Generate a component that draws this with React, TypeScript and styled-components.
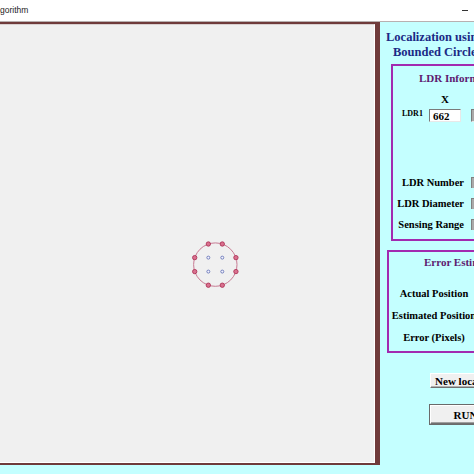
import React from "react";
import styled, { createGlobalStyle } from "styled-components";

const GlobalStyle = createGlobalStyle`
  html, body { margin: 0; padding: 0; overflow: hidden; background: #ffffff; }
  #root { width: 474px; height: 474px; }
`;

const BROWN = "#6f3a3a";
const CYAN = "#c4ffff";
const PURPLE = "#a22ab0";

const Window = styled.div`
  width: 474px;
  height: 474px;
  display: flex;
  flex-direction: column;
  overflow: hidden;
`;

const TitleBar = styled.div`
  height: 21px;
  flex-shrink: 0;
  background: #ffffff;
  display: flex;
  align-items: center;
  justify-content: space-between;
  font-family: "Liberation Sans", Arial, sans-serif;
  font-size: 8.5px;
  color: #1c1c1c;
`;

const TitleText = styled.span`
  margin-left: 0;
  padding-bottom: 1px;
`;

const Minimize = styled.span`
  width: 6px;
  height: 1px;
  background: #333333;
  margin-right: 6px;
`;

const Body = styled.div`
  flex: 1;
  display: flex;
  background: ${CYAN};
  overflow: hidden;
  border-top: 1px solid #b8b0b0;
`;

const CanvasColumn = styled.div`
  width: 380px;
  flex-shrink: 0;
  padding-bottom: 9px;
  display: flex;
`;

const Frame = styled.div`
  flex: 1;
  display: flex;
  background: ${BROWN};
  padding: 2px 5px 2px 0;
`;

const Canvas = styled.div`
  flex: 1;
  background: #f0f0f0;
  border-right: 1px solid #ffffff;
  border-bottom: 1px solid #ffffff;
  border-top: 1px solid #d8d0d0;
  display: flex;
`;

const Drawing = styled.svg`
  width: 100%;
  height: 100%;
  display: block;
`;

const Panel = styled.div`
  flex: 1;
  min-width: 0;
  overflow: hidden;
  font-family: "Liberation Serif", "Times New Roman", serif;
  font-weight: bold;
  color: #000;
`;

const PanelInner = styled.div`
  width: 200px;
  display: flex;
  flex-direction: column;
`;

const Heading = styled.div`
  margin-top: 8px;
  color: #1b2a85;
  font-size: 12.5px;
  line-height: 15px;
  white-space: nowrap;
`;

const HeadingLine = styled.div<{ $indent: number }>`
  padding-left: ${(p) => p.$indent}px;
`;

const Box = styled.div<{ $left: number; $top: number; $height: number }>`
  margin-left: ${(p) => p.$left}px;
  margin-top: ${(p) => p.$top}px;
  height: ${(p) => p.$height}px;
  width: 170px;
  box-sizing: border-box;
  border: 2px solid ${PURPLE};
  display: flex;
  flex-direction: column;
`;

const BoxTitle = styled.div<{ $indent: number; $top: number }>`
  color: #5e1a70;
  font-size: 11px;
  line-height: 14px;
  padding-top: ${(p) => p.$top}px;
  padding-left: ${(p) => p.$indent}px;
  white-space: nowrap;
`;

const CoordGrid = styled.div`
  margin-top: 8px;
  padding-left: 9px;
  display: grid;
  grid-template-columns: 27px 42px 42px;
  grid-template-rows: 12px 13px;
  row-gap: 4px;
  align-items: center;
`;

const ColHead = styled.div`
  font-size: 11px;
  text-align: center;
  width: 32px;
  line-height: 12px;
`;

const SmallLabel = styled.div`
  font-size: 8px;
  line-height: 10px;
  margin-top: -3px;
`;

const CoordInput = styled.div<{ $filled?: boolean }>`
  width: 32px;
  height: 13px;
  box-sizing: border-box;
  background: ${(p) => (p.$filled ? "#ffffff" : "#a9a9a9")};
  border-top: 1px solid #7a7a7a;
  border-left: 1px solid #7a7a7a;
  border-right: 1px solid #e8e8e8;
  border-bottom: 1px solid #e8e8e8;
  font-size: 11px;
  line-height: 12px;
  padding-left: 3px;
`;

const PropGrid = styled.div`
  margin-top: 50px;
  display: grid;
  grid-template-columns: 71px 30px;
  column-gap: 7px;
  grid-auto-rows: 21px;
  align-items: center;
`;

const PropLabel = styled.div`
  font-size: 10.5px;
  text-align: right;
  white-space: nowrap;
`;

const GrayField = styled.div`
  height: 10px;
  background: #a9a9a9;
  border-top: 1px solid #808080;
  border-left: 1px solid #808080;
`;

const ErrorRows = styled.div`
  margin-top: 13px;
  display: flex;
  flex-direction: column;
`;

const ErrorRow = styled.div`
  width: 90px;
  height: 22px;
  display: flex;
  align-items: center;
  justify-content: center;
  font-size: 10.5px;
  white-space: nowrap;
`;

const ButtonColumn = styled.div`
  display: flex;
  flex-direction: column;
  padding-left: 50px;
`;

const Button = styled.div<{ $top: number; $height: number; $strong?: boolean }>`
  margin-top: ${(p) => p.$top}px;
  width: 71px;
  height: ${(p) => p.$height}px;
  box-sizing: border-box;
  background: #f0f0f0;
  font-size: 11px;
  display: flex;
  align-items: center;
  justify-content: center;
  white-space: nowrap;
  border-top: 1px solid #ffffff;
  border-left: 1px solid #ffffff;
  border-right: 1px solid #707070;
  border-bottom: 1px solid #707070;
  box-shadow: ${(p) =>
    p.$strong
      ? "0 0 0 1px #6a6a6a, inset -1px -1px 0 #a0a0a0"
      : "inset -1px -1px 0 #b0b0b0"};
`;

const cx = 216.3;
const cy = 240.7;
const outer = [
  [-7, -20.7],
  [7, -20.7],
  [20.7, -7],
  [20.7, 7],
  [7, 20.7],
  [-7, 20.7],
  [-20.7, 7],
  [-20.7, -7],
];
const inner = [
  [-7, -7],
  [7, -7],
  [-7, 7],
  [7, 7],
];

export default function App() {
  return (
    <Window>
      <GlobalStyle />
      <TitleBar>
        <TitleText>gorithm</TitleText>
        <Minimize />
      </TitleBar>
      <Body>
        <CanvasColumn>
          <Frame>
            <Canvas>
              <Drawing viewBox="0 0 374 439" preserveAspectRatio="xMinYMin meet">
                <circle cx={cx} cy={cy} r={21.8} fill="none" stroke="#c77a92" strokeWidth={1} />
                {outer.map(([dx, dy], i) => (
                  <circle
                    key={`o${i}`}
                    cx={cx + dx}
                    cy={cy + dy}
                    r={2.2}
                    fill="#d9708e"
                    stroke="#a8284e"
                    strokeWidth={0.8}
                  />
                ))}
                {inner.map(([dx, dy], i) => (
                  <circle
                    key={`i${i}`}
                    cx={cx + dx}
                    cy={cy + dy}
                    r={1.5}
                    fill="#f4f4ff"
                    stroke="#5868b0"
                    strokeWidth={0.8}
                  />
                ))}
              </Drawing>
            </Canvas>
          </Frame>
        </CanvasColumn>
        <Panel>
          <PanelInner>
            <Heading>
              <HeadingLine $indent={6}>Localization using Bounded</HeadingLine>
              <HeadingLine $indent={13}>Bounded Circle Algorithm</HeadingLine>
            </Heading>
            <Box $left={11} $top={4} $height={177}>
              <BoxTitle $indent={26} $top={5}>LDR Information</BoxTitle>
              <CoordGrid>
                <span />
                <ColHead>X</ColHead>
                <ColHead>Y</ColHead>
                <SmallLabel>LDR1</SmallLabel>
                <CoordInput $filled>662</CoordInput>
                <CoordInput />
              </CoordGrid>
              <PropGrid>
                <PropLabel>LDR Number</PropLabel>
                <GrayField />
                <PropLabel>LDR Diameter</PropLabel>
                <GrayField />
                <PropLabel>Sensing Range</PropLabel>
                <GrayField />
              </PropGrid>
            </Box>
            <Box $left={7} $top={9} $height={103}>
              <BoxTitle $indent={35} $top={3}>Error Estimation</BoxTitle>
              <ErrorRows>
                <ErrorRow>Actual Position</ErrorRow>
                <ErrorRow>Estimated Position</ErrorRow>
                <ErrorRow>Error (Pixels)</ErrorRow>
              </ErrorRows>
            </Box>
            <ButtonColumn>
              <Button $top={20} $height={15}>New location</Button>
              <Button $top={17} $height={19} $strong>RUN</Button>
            </ButtonColumn>
          </PanelInner>
        </Panel>
      </Body>
    </Window>
  );
}
